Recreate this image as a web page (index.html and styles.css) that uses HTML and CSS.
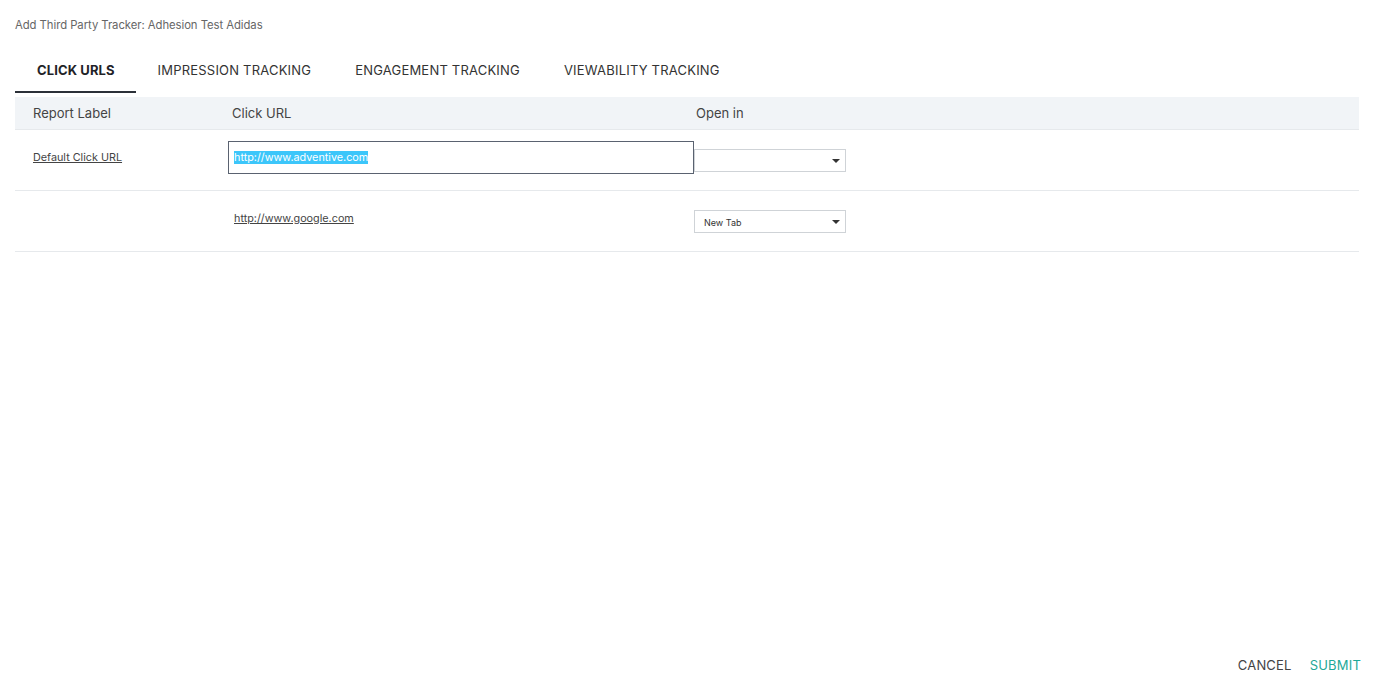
FILE: index.html
```html
<!DOCTYPE html>
<html lang="en">
<head>
<meta charset="utf-8">
<title>Add Third Party Tracker</title>
<link rel="stylesheet" href="styles.css">
</head>
<body>
<div class="dialog">
  <div class="dialog-title">Add Third Party Tracker: Adhesion Test Adidas</div>

  <nav class="tabs">
    <a class="tab tab-active">CLICK URLS</a>
    <a class="tab">IMPRESSION TRACKING</a>
    <a class="tab">ENGAGEMENT TRACKING</a>
    <a class="tab">VIEWABILITY TRACKING</a>
  </nav>

  <div class="grid">
    <div class="row row-head">
      <div class="cell cell-label">Report Label</div>
      <div class="cell cell-url">Click URL</div>
      <div class="cell cell-open">Open in</div>
    </div>

    <div class="row">
      <div class="cell cell-label"><a class="link">Default Click URL</a></div>
      <div class="cell cell-url">
        <div class="text-input"><span class="selected">http://www.adventive.com</span></div>
      </div>
      <div class="cell cell-open">
        <div class="select"><span class="select-value"></span><span class="caret"></span></div>
      </div>
    </div>

    <div class="row">
      <div class="cell cell-label"></div>
      <div class="cell cell-url"><a class="link link-url">http://www.google.com</a></div>
      <div class="cell cell-open">
        <div class="select"><span class="select-value">New Tab</span><span class="caret"></span></div>
      </div>
    </div>
  </div>

  <div class="actions">
    <button class="btn btn-cancel">CANCEL</button>
    <button class="btn btn-submit">SUBMIT</button>
  </div>
</div>
</body>
</html>
```

FILE: styles.css
```css
html, body {
  margin: 0;
  padding: 0;
  background: #fff;
}

body {
  font-family: "Inter", "Open Sans", sans-serif;
  color: #333;
}

.dialog {
  min-height: 690px;
  box-sizing: border-box;
  display: flex;
  flex-direction: column;
  padding: 0 17px 0 15px;
}

.dialog-title {
  font-size: 11.3px;
  color: #666;
  line-height: 16px;
  padding-top: 17px;
  letter-spacing: -0.05px;
}

.tabs {
  display: flex;
  margin-top: 17px;
}

.tab {
  font-size: 13px;
  color: #333;
  padding: 0 22px;
  height: 41px;
  line-height: 40px;
  border-bottom: 2px solid transparent;
  letter-spacing: 0.2px;
}

.tab-active {
  font-weight: 700;
  color: #1f2328;
  border-bottom-color: #2b3038;
  padding: 0 21px 0 22px;
  letter-spacing: 0.1px;
}

.grid {
  margin-top: 4px;
}

.row {
  display: grid;
  grid-template-columns: 213px 466px 1fr;
  height: 60px;
  border-bottom: 1px solid #e6e9ec;
  align-items: stretch;
}

.cell {
  display: flex;
  align-items: center;
}

.row .cell-label,
.row .cell-url {
  padding-bottom: 5px;
}

.row-head {
  height: 32px;
  background: #f1f4f7;
  font-size: 13px;
  color: #444;
}

.row-head .cell-label,
.row-head .cell-url {
  padding-bottom: 1px;
}

.row-head .cell-open {
  padding-bottom: 1px;
  padding-left: 2px;
}

.cell-label {
  padding-left: 18px;
}

.row-head .cell-url {
  padding-left: 4px;
}

.link {
  font-size: 10.8px;
  color: #444;
  text-decoration: underline;
}

.link-url {
  margin-left: 6px;
}

.cell-url .text-input {
  flex: 1;
}

.text-input {
  height: 33px;
  box-sizing: border-box;
  border: 1px solid #5a6270;
  display: flex;
  align-items: center;
  padding-left: 5px;
  font-size: 10.8px;
}

.selected {
  background: #3cc6fa;
  color: #fff;
  line-height: 13px;
}

.select {
  width: 152px;
  height: 23px;
  box-sizing: border-box;
  border: 1px solid #cfd3d7;
  display: flex;
  align-items: center;
  justify-content: space-between;
  padding: 0 5px 0 9px;
}

.select-value {
  font-size: 9px;
  color: #333;
  padding-top: 2px;
}

.caret {
  width: 0;
  height: 0;
  border-left: 4px solid transparent;
  border-right: 4px solid transparent;
  border-top: 4px solid #333;
  margin-top: 1px;
}

.actions {
  margin-top: auto;
  display: flex;
  justify-content: flex-end;
  padding-bottom: 7px;
  margin-right: -17px;
}

.btn {
  font-family: inherit;
  font-size: 13px;
  background: none;
  border: none;
  height: 36px;
  padding: 0 9px;
  letter-spacing: 0.2px;
  cursor: pointer;
}

.btn-cancel {
  color: #444;
}

.btn-submit {
  color: #1fa898;
  padding-right: 15px;
}
```
